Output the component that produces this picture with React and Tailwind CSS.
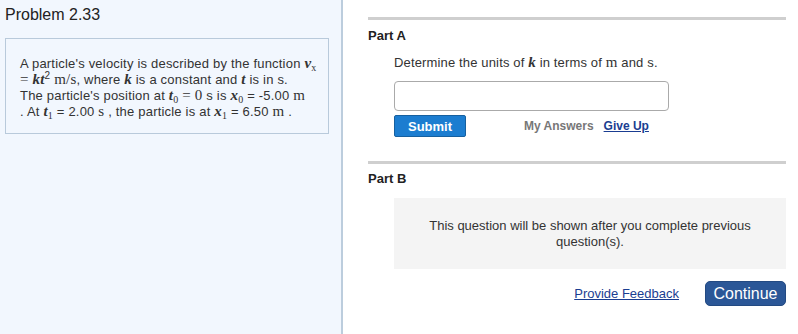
import React from 'react';

const Var = ({ children }) => (
  <span className="italic font-bold text-[15px] leading-none" style={{ fontFamily: '"Liberation Serif", serif' }}>{children}</span>
);
const Rm = ({ children }) => (
  <span className="text-[15px] leading-none" style={{ fontFamily: '"Liberation Serif", serif' }}>{children}</span>
);
const Sub = ({ children }) => <sub className="text-[10px] not-italic font-normal leading-none">{children}</sub>;

export default function App() {
  return (
    <div className="flex w-[798px] h-[334px] bg-white text-[#333] font-['Liberation_Sans',Arial,sans-serif] overflow-hidden">
      {/* Problem panel */}
      <aside className="w-[343px] shrink-0 bg-[#f2f7fe] border-r-2 border-[#bccddd]">
        <h1 className="pl-[5px] pt-[5px] text-[16px] leading-[20px] text-[#222]">Problem 2.33</h1>
        <div className="ml-[5px] mt-[13px] w-[324px] h-[96px] border border-[#b9cadb] pl-[14px] pt-[17px] text-[13px] leading-[16px] tracking-[0.2px] text-[#333]">
          A particle's velocity is described by the function <Var>v<Sub>x</Sub></Var>
          <br />
          <Rm>=</Rm> <Var>kt</Var><sup className="text-[10px] leading-none">2</sup> <Rm>m/s</Rm>, where <Var>k</Var> is a constant and <Var>t</Var> is in s.
          <br />
          The particle's position at <Var>t<Sub>0</Sub></Var> <Rm>= 0</Rm> s is <Var>x<Sub>0</Sub></Var> = -5.00 <Rm>m</Rm>
          <br />
          . At <Var>t<Sub>1</Sub></Var> = 2.00 <Rm>s</Rm> , the particle is at <Var>x<Sub>1</Sub></Var> = 6.50 <Rm>m</Rm> .
        </div>
      </aside>

      {/* Parts */}
      <main className="flex-1 pl-[25px] pr-[12px]">
        <section className="mt-[17px] border-t-[3px] border-[#cfcfcf]">
          <h2 className="mt-[8px] text-[13px] leading-[15px] font-bold text-[#222]">Part A</h2>
          <div className="pl-[26px]">
            <p className="mt-[12px] text-[13px] leading-[16px] tracking-[0.15px] text-[#333]">
              Determine the units of <Var>k</Var> in terms of <Rm>m</Rm> and s.
            </p>
            <input className="block mt-[10px] w-[275px] h-[30px] rounded-[4px] border border-[#aaaaaa] bg-white" />
            <div className="mt-[4px] flex items-center">
              <button className="w-[72px] h-[22px] rounded-[2px] bg-[#1c7dd0] border border-[#16609f] text-white text-[13px] font-bold leading-none">
                Submit
              </button>
              <span className="ml-[58px] text-[12px] font-bold text-[#777]">My Answers</span>
              <a className="ml-[10px] text-[12px] font-bold text-[#1a3d91] underline">Give Up</a>
            </div>
          </div>
        </section>

        <section className="mt-[24px] border-t-[3px] border-[#cfcfcf]">
          <h2 className="mt-[7px] text-[13px] leading-[15px] font-bold text-[#222]">Part B</h2>
          <div className="ml-[26px] mt-[12px] h-[71px] bg-[#f4f4f4] flex items-center justify-center text-center text-[13px] leading-[16px] text-[#333] px-[20px]">
            This question will be shown after you complete previous
            <br />
            question(s).
          </div>
          <div className="mt-[12px] flex items-center justify-end">
            <a className="text-[13px] text-[#1a3d91] underline">Provide Feedback</a>
            <button className="ml-[26px] w-[81px] h-[25px] rounded-[5px] bg-[#2b5797] border border-[#234a82] text-white text-[16px] leading-none">
              Continue
            </button>
          </div>
        </section>
      </main>
    </div>
  );
}
